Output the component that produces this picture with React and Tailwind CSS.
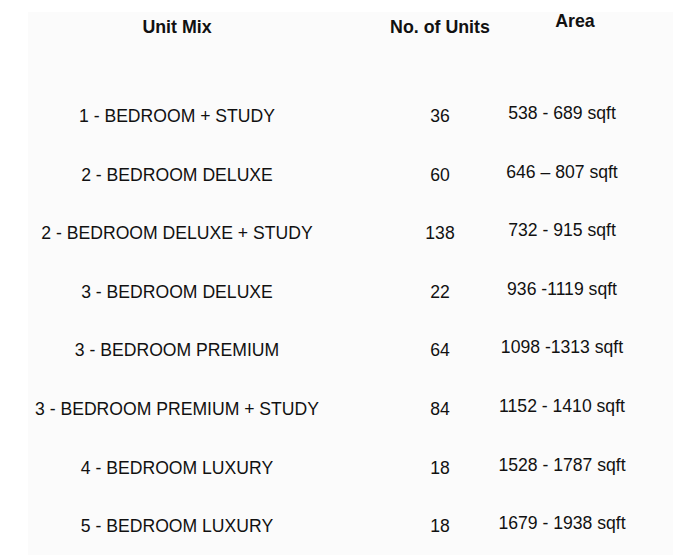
import React from "react";

const rows = [
  { mix: "1 - BEDROOM + STUDY", units: "36", area: "538 - 689 sqft" },
  { mix: "2 - BEDROOM DELUXE", units: "60", area: "646 – 807 sqft" },
  { mix: "2 - BEDROOM DELUXE + STUDY", units: "138", area: "732 - 915 sqft" },
  { mix: "3 - BEDROOM DELUXE", units: "22", area: "936 -1119 sqft" },
  { mix: "3 - BEDROOM PREMIUM", units: "64", area: "1098 -1313 sqft" },
  { mix: "3 - BEDROOM PREMIUM + STUDY", units: "84", area: "1152 - 1410 sqft" },
  { mix: "4 - BEDROOM LUXURY", units: "18", area: "1528 - 1787 sqft" },
  { mix: "5 - BEDROOM LUXURY", units: "18", area: "1679 - 1938 sqft" },
];

const App = () => {
  return (
    <div className="w-[673px] h-[555px] bg-white pl-[28px] pt-[12px] overflow-hidden font-['Liberation_Sans',Arial,sans-serif] text-[#111]">
      <div className="h-full bg-[#fbfbfb]">
        <div className="grid grid-cols-[298px_228px_80px] h-[32px] leading-none font-bold text-[17.8px]">
          <div className="flex items-center justify-center whitespace-nowrap">Unit Mix</div>
          <div className="flex items-center justify-center whitespace-nowrap">No. of Units</div>
          <div className="flex items-center justify-center whitespace-nowrap pb-[12px] pr-[38px]">Area</div>
        </div>
        <div className="mt-[43px]">
          {rows.map((r) => (
            <div
              key={r.mix}
              className="grid grid-cols-[298px_228px_80px] h-[58.6px] text-[17.6px]"
            >
              <div className="flex items-center justify-center whitespace-nowrap">{r.mix}</div>
              <div className="flex items-center justify-center whitespace-nowrap">{r.units}</div>
              <div className="flex items-center justify-center whitespace-nowrap pb-[6px] pr-[64px]">{r.area}</div>
            </div>
          ))}
        </div>
      </div>
    </div>
  );
};

export default App;
